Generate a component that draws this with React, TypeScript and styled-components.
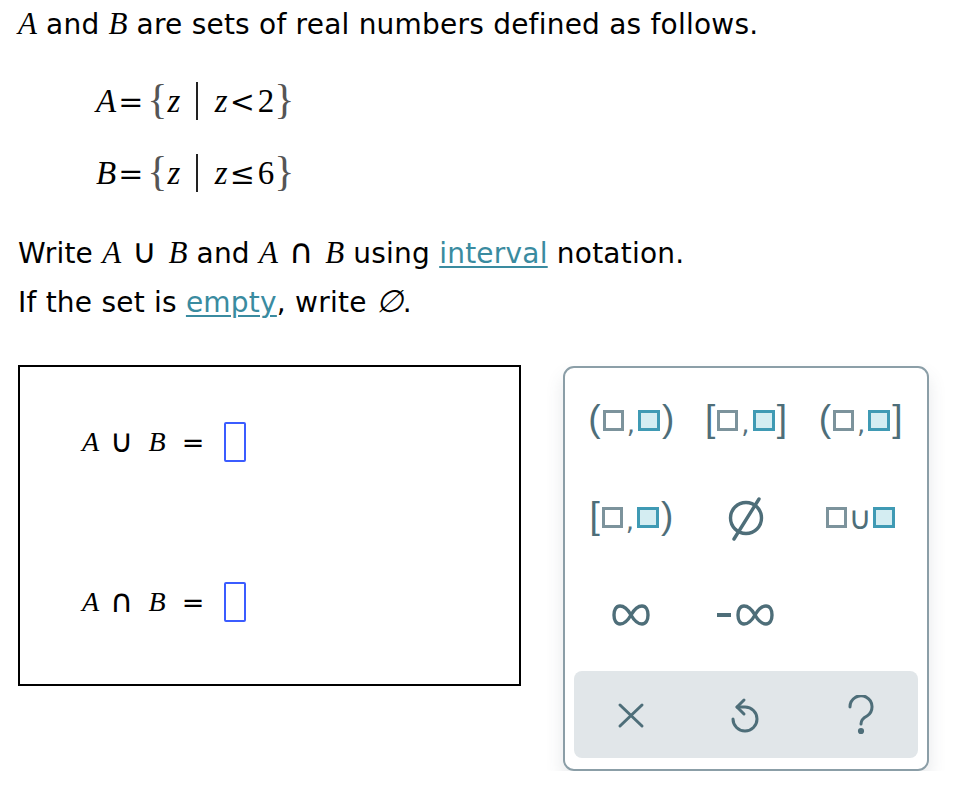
import styled, { createGlobalStyle } from "styled-components";

const GlobalStyle = createGlobalStyle`
  body {
    margin: 0;
    background: #ffffff;
    font-family: "DejaVu Sans", Verdana, sans-serif;
    color: #000;
  }
`;

const Page = styled.div`
  padding: 0 18px;
  width: 958px;
  box-sizing: border-box;
`;

const Intro = styled.p`
  margin: 0;
  font-size: 28px;
  line-height: 48px;
  letter-spacing: 0.22px;
  white-space: nowrap;
`;

const Var = styled.span<{ $size?: number }>`
  font-family: "Liberation Serif", "Times New Roman", serif;
  font-style: italic;
  font-size: ${(p) => p.$size ?? 28}px;
  letter-spacing: 0;
`;

const MathBlock = styled.div`
  margin-top: 16px;
  padding-left: 78px;
  font-family: "Liberation Serif", "Times New Roman", serif;
  font-size: 33px;
`;

const MathLine = styled.div`
  height: 72px;
  display: flex;
  align-items: center;
`;

const Rel = styled.span<{ $l?: number; $r?: number }>`
  font-family: "DejaVu Serif", serif;
  font-size: 30px;
  margin-left: ${(p) => p.$l ?? 0}px;
  margin-right: ${(p) => p.$r ?? 0}px;
`;

const Brace = styled.span`
  font-size: 42px;
  color: #555;
  position: relative;
  top: -2px;
`;

const Bar = styled.span`
  display: inline-block;
  width: 1.5px;
  height: 38px;
  background: #222;
  margin: 0 17px 0 16px;
`;

const Instructions = styled.div`
  margin-top: 20px;
  font-size: 28px;
  line-height: 48px;
  letter-spacing: 0.22px;
  white-space: nowrap;
`;

const TextOp = styled.span`
  font-size: 34px;
  line-height: 20px;
  margin: 0 2px;
`;

const Link = styled.a`
  color: #3a8ba0;
  text-decoration: underline;
  text-underline-offset: 3px;
  text-decoration-thickness: 2px;
`;

const Work = styled.div`
  margin-top: 38px;
  display: flex;
  align-items: flex-start;
  gap: 42px;
`;

const AnswerBox = styled.div`
  width: 503px;
  height: 321px;
  box-sizing: border-box;
  border: 2px solid #000;
  padding: 55px 0 0 62px;
  display: flex;
  flex-direction: column;
  gap: 120px;
`;

const AnswerRow = styled.div`
  display: flex;
  align-items: center;
  height: 40px;
`;

const SetOp = styled.span`
  font-family: "DejaVu Sans", sans-serif;
  font-size: 32px;
  margin: 0 15px 0 11px;
  position: relative;
  top: -1px;
`;

const Eq = styled.span`
  font-family: "DejaVu Sans", sans-serif;
  font-size: 27px;
  margin: 0 20px 0 16px;
`;

const Slot = styled.span`
  display: inline-block;
  width: 22px;
  height: 40px;
  box-sizing: border-box;
  border: 2px solid #3b5cff;
  border-radius: 2px;
`;

const Panel = styled.div`
  margin-top: 1px;
  width: 366px;
  height: 405px;
  box-sizing: border-box;
  border: 2px solid #8b9ea7;
  border-radius: 11px;
  padding: 4px 9px 11px;
  box-shadow: 0 10px 18px rgba(60, 80, 90, 0.13);
  display: flex;
  flex-direction: column;
`;

const Keys = styled.div`
  display: grid;
  grid-template-columns: repeat(3, 1fr);
  grid-template-rows: repeat(3, 97px);
`;

const Key = styled.div`
  display: flex;
  align-items: center;
  justify-content: center;
  color: #4e6e79;
`;

const Interval = styled.div`
  display: flex;
  align-items: center;
  gap: 2px;
`;

const Fence = styled.span`
  font-family: "Liberation Sans", Arial, sans-serif;
  font-size: 37px;
  line-height: 40px;
  color: #4e6e79;
  position: relative;
  top: -2px;
`;

const Comma = styled.span`
  font-family: "DejaVu Sans", sans-serif;
  font-size: 26px;
  color: #55727d;
  position: relative;
  top: 3px;
  margin: 0 1px;
`;

const Square = styled.span<{ $filled?: boolean }>`
  display: inline-block;
  width: ${(p) => (p.$filled ? 22 : 21)}px;
  height: 21px;
  box-sizing: border-box;
  border: 3px solid ${(p) => (p.$filled ? "#3f9ab4" : "#7c939c")};
  background: ${(p) => (p.$filled ? "#d4edf2" : "transparent")};
`;

const Cup = styled.span`
  font-family: "DejaVu Sans", sans-serif;
  font-size: 32px;
  color: #4e6e79;
  margin: 0 1px;
`;

const Tools = styled.div`
  margin-top: auto;
  height: 87px;
  background: #e1e6e9;
  border-radius: 8px;
  display: grid;
  grid-template-columns: repeat(3, 1fr);
`;

const Tool = styled.button`
  border: none;
  background: transparent;
  display: flex;
  align-items: center;
  justify-content: center;
  padding: 0;
  color: #4e6e79;
`;

const Fenced = ({ open, close }: { open: string; close: string }) => (
  <Interval>
    <Fence>{open}</Fence>
    <Square />
    <Comma>,</Comma>
    <Square $filled />
    <Fence>{close}</Fence>
  </Interval>
);

const Infinity = () => (
  <svg width="38" height="22" viewBox="0 0 38 22" fill="none" stroke="currentColor" strokeWidth="3.4">
    <path d="M19 11 C15 4 11 2 8 2 C4 2 2 6 2 11 C2 16 4 20 8 20 C11 20 15 18 19 11 C23 4 27 2 30 2 C34 2 36 6 36 11 C36 16 34 20 30 20 C27 20 23 18 19 11 Z" />
  </svg>
);

export default function App() {
  return (
    <Page>
      <GlobalStyle />
      <Intro>
        <Var $size={31}>A</Var> and <Var $size={31}>B</Var> are sets of real numbers defined as follows.
      </Intro>
      <MathBlock>
        <MathLine>
          <Var $size={33}>A</Var>
          <Rel $l={2} $r={4}>=</Rel>
          <Brace>{"{"}</Brace>
          <Var $size={33}>z</Var>
          <Bar />
          <Var $size={33}>z</Var>
          <Rel $l={2} $r={3}>&lt;</Rel>
          <span>2</span>
          <Brace>{"}"}</Brace>
        </MathLine>
        <MathLine>
          <Var $size={33}>B</Var>
          <Rel $l={2} $r={4}>=</Rel>
          <Brace>{"{"}</Brace>
          <Var $size={33}>z</Var>
          <Bar />
          <Var $size={33}>z</Var>
          <Rel $l={2} $r={3}>≤</Rel>
          <span>6</span>
          <Brace>{"}"}</Brace>
        </MathLine>
      </MathBlock>
      <Instructions>
        <div>
          Write <Var $size={31}>A</Var> <TextOp>∪</TextOp> <Var $size={31}>B</Var> and <Var $size={31}>A</Var>{" "}
          <TextOp>∩</TextOp> <Var $size={31}>B</Var> using <Link>interval</Link> notation.
        </div>
        <div>
          If the set is <Link>empty</Link>, write <Var $size={31}>∅</Var>.
        </div>
      </Instructions>
      <Work>
        <AnswerBox>
          <AnswerRow>
            <Var>A</Var>
            <SetOp>∪</SetOp>
            <Var>B</Var>
            <Eq>=</Eq>
            <Slot />
          </AnswerRow>
          <AnswerRow>
            <Var>A</Var>
            <SetOp>∩</SetOp>
            <Var>B</Var>
            <Eq>=</Eq>
            <Slot />
          </AnswerRow>
        </AnswerBox>
        <Panel>
          <Keys>
            <Key>
              <Fenced open="(" close=")" />
            </Key>
            <Key>
              <Fenced open="[" close="]" />
            </Key>
            <Key>
              <Fenced open="(" close="]" />
            </Key>
            <Key>
              <Fenced open="[" close=")" />
            </Key>
            <Key>
              <svg width="40" height="46" viewBox="0 0 40 46" fill="none" stroke="currentColor" strokeWidth="3.4" strokeLinecap="round">
                <circle cx="20" cy="23" r="15.5" />
                <path d="M33 4 L8 44" />
              </svg>
            </Key>
            <Key>
              <Square />
              <Cup>∪</Cup>
              <Square $filled />
            </Key>
            <Key>
              <Infinity />
            </Key>
            <Key>
              <svg width="15" height="22" viewBox="0 0 15 22">
                <rect x="0" y="9" width="14" height="4" fill="currentColor" />
              </svg>
              <span style={{ width: 4 }} />
              <Infinity />
            </Key>
            <Key />
          </Keys>
          <Tools>
            <Tool aria-label="clear">
              <svg width="28" height="28" viewBox="0 0 28 28" fill="none" stroke="currentColor" strokeWidth="3" strokeLinecap="round">
                <path d="M3 4 L25 25 M25 4 L3 25" />
              </svg>
            </Tool>
            <Tool aria-label="undo">
              <svg width="30" height="36" viewBox="0 0 30 36" fill="none" stroke="currentColor" strokeWidth="3" strokeLinecap="round" strokeLinejoin="round">
                <path d="M13 3 L6 10 L13 17" />
                <path d="M6 10 H14 A12 12 0 1 1 2 22" />
              </svg>
            </Tool>
            <Tool aria-label="help">
              <svg width="28" height="40" viewBox="0 0 28 40" fill="none" stroke="currentColor" strokeWidth="3" strokeLinecap="round">
                <path d="M3 12 A11 11 0 1 1 20 21 C16 23 14 25 14 29" />
                <circle cx="14" cy="36" r="1.6" fill="currentColor" />
              </svg>
            </Tool>
          </Tools>
        </Panel>
      </Work>
    </Page>
  );
}
